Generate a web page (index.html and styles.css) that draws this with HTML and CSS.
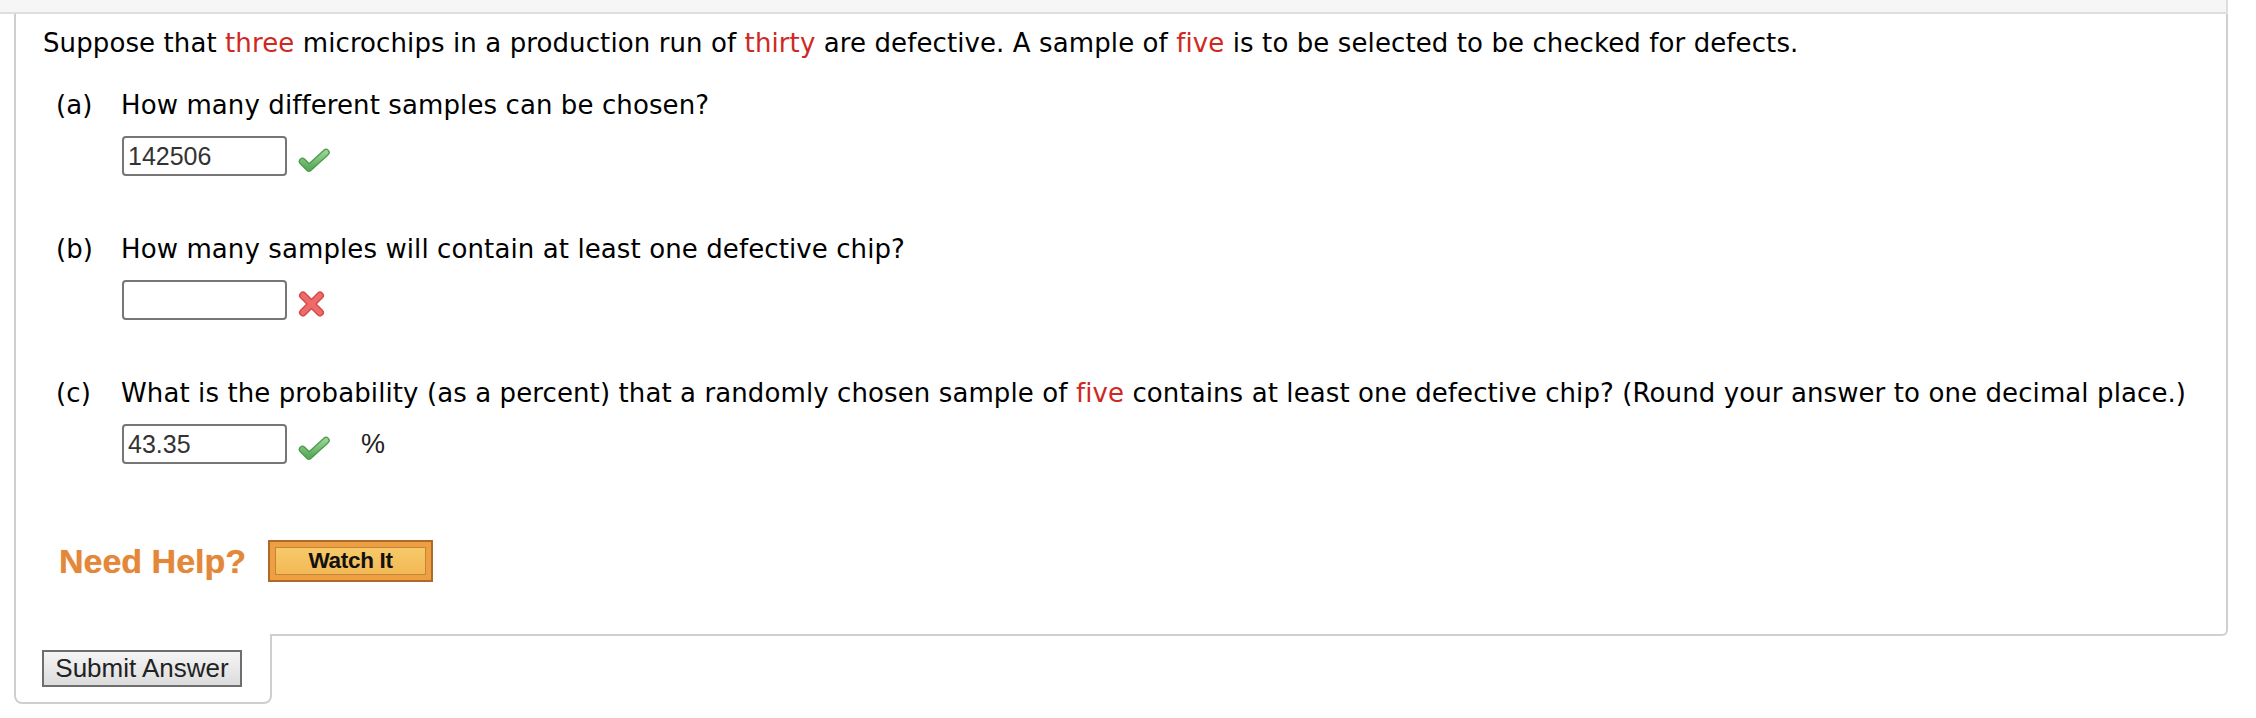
FILE: index.html
```html
<!DOCTYPE html>
<html lang="en">
<head>
<meta charset="utf-8">
<title>Question</title>
<link rel="stylesheet" href="styles.css">
</head>
<body>
<div class="topbar"></div>
<div class="question">
  <div class="qbody">
    <p class="stem">Suppose that <span class="red">three</span> microchips in a production run of <span class="red">thirty</span> are defective. A sample of <span class="red">five</span> is to be selected to be checked for defects.</p>

    <div class="part first">
      <div class="qline"><span class="label">(a)</span><span class="qtext">How many different samples can be chosen?</span></div>
      <div class="ans">
        <span class="field">142506</span>
        <svg class="icon check" width="32" height="25" viewBox="0 0 32 25"><defs><linearGradient id="g1" x1="0" y1="0" x2="0" y2="1"><stop offset="0" stop-color="#93d493"/><stop offset="1" stop-color="#5aab5a"/></linearGradient></defs><path d="M4.5 13.5 L11 20 L28 4.5" fill="none" stroke="#4c9a4c" stroke-width="7.5" stroke-linecap="round" stroke-linejoin="round"/><path d="M4.5 13.5 L11 20 L28 4.5" fill="none" stroke="url(#g1)" stroke-width="5" stroke-linecap="round" stroke-linejoin="round"/></svg>
      </div>
    </div>

    <div class="part">
      <div class="qline"><span class="label">(b)</span><span class="qtext">How many samples will contain at least one defective chip?</span></div>
      <div class="ans">
        <span class="field"></span>
        <svg class="icon cross" width="29" height="28" viewBox="0 0 29 28"><path d="M6 5.5 L23 22.5 M23 5.5 L6 22.5" fill="none" stroke="#d94a4a" stroke-width="8" stroke-linecap="round"/><path d="M6 5.5 L23 22.5 M23 5.5 L6 22.5" fill="none" stroke="#ec6b6b" stroke-width="5" stroke-linecap="round"/></svg>
      </div>
    </div>

    <div class="part">
      <div class="qline"><span class="label">(c)</span><span class="qtext">What is the probability (as a percent) that a randomly chosen sample of <span class="red">five</span> contains at least one defective chip? (Round your answer to one decimal place.)</span></div>
      <div class="ans">
        <span class="field">43.35</span>
        <svg class="icon check" width="32" height="25" viewBox="0 0 32 25"><defs><linearGradient id="g2" x1="0" y1="0" x2="0" y2="1"><stop offset="0" stop-color="#93d493"/><stop offset="1" stop-color="#5aab5a"/></linearGradient></defs><path d="M4.5 13.5 L11 20 L28 4.5" fill="none" stroke="#4c9a4c" stroke-width="7.5" stroke-linecap="round" stroke-linejoin="round"/><path d="M4.5 13.5 L11 20 L28 4.5" fill="none" stroke="url(#g2)" stroke-width="5" stroke-linecap="round" stroke-linejoin="round"/></svg>
        <span class="unit">%</span>
      </div>
    </div>

    <div class="help">
      <span class="need">Need Help?</span>
      <span class="watch"><span class="watch-inner">Watch It</span></span>
    </div>
  </div>
  <div class="tab">
    <button class="submit" type="button">Submit Answer</button>
  </div>
</div>
</body>
</html>
```

FILE: styles.css
```css
html, body {
  margin: 0;
  padding: 0;
  background: #ffffff;
}

body {
  font-family: "DejaVu Sans", Verdana, sans-serif;
  font-size: 26px;
  color: #000;
}

.topbar {
  width: 2226px;
  height: 12px;
  background: #f6f6f6;
  border-bottom: 2px solid #dedede;
  border-right: 2px solid #dedede;
  border-bottom-right-radius: 2px;
}

.question {
  margin-left: 14px;
  width: 2214px;
}

.qbody {
  border-left: 2px solid #cfcfcf;
  border-right: 2px solid #cfcfcf;
  border-bottom: 2px solid #cfcfcf;
  border-bottom-right-radius: 6px;
  padding: 14px 0 52px 0;
}

.stem {
  margin: 0 0 0 27px;
  line-height: 30px;
  white-space: nowrap;
  letter-spacing: 0.1px;
}

.red {
  color: #d0281f;
}

.part {
  margin-top: 58px;
  margin-left: 40px;
}

.part.first {
  margin-top: 32px;
}

.qline {
  display: flex;
  line-height: 30px;
  white-space: nowrap;
  letter-spacing: 0.1px;
}

.label {
  width: 65px;
  flex: none;
}

.ans {
  display: flex;
  align-items: center;
  margin-top: 16px;
  margin-left: 66px;
  height: 40px;
}

.field {
  box-sizing: border-box;
  width: 165px;
  height: 40px;
  border: 2px solid #767676;
  border-radius: 4px;
  padding: 0 4px;
  font-family: "Liberation Sans", Arial, sans-serif;
  font-size: 25px;
  line-height: 36px;
  color: #333;
  background: #fff;
}

.icon {
  display: block;
  flex: none;
}

.check {
  margin-left: 11px;
  margin-top: 8px;
}

.cross {
  margin-left: 10px;
  margin-top: 8px;
}

.unit {
  margin-left: 31px;
  font-family: "Liberation Sans", Arial, sans-serif;
  font-size: 27px;
  color: #222;
  line-height: 40px;
}

.help {
  display: flex;
  align-items: center;
  margin-top: 76px;
  margin-left: 43px;
  height: 42px;
}

.need {
  font-family: "Liberation Sans", Arial, sans-serif;
  font-weight: bold;
  font-size: 34px;
  color: #e3873a;
  line-height: 42px;
  text-shadow: 0 0 1px rgba(227, 135, 58, 0.7);
}

.watch {
  box-sizing: border-box;
  margin-left: 22px;
  width: 165px;
  height: 42px;
  border: 2px solid #ad6a2b;
  background: #ee9f42;
  padding: 5px;
  display: flex;
}

.watch-inner {
  flex: 1;
  border: 1px solid #c4843a;
  background: linear-gradient(#f7c968, #f2b955);
  font-family: "Liberation Sans", Arial, sans-serif;
  font-weight: bold;
  font-size: 22.5px;
  letter-spacing: -0.3px;
  color: #111;
  line-height: 26px;
  text-align: center;
}

.tab {
  box-sizing: border-box;
  width: 258px;
  margin-top: -2px;
  position: relative;
  background: #fff;
  border-left: 2px solid #cfcfcf;
  border-right: 2px solid #cfcfcf;
  border-bottom: 2px solid #cfcfcf;
  border-bottom-left-radius: 8px;
  border-bottom-right-radius: 8px;
  padding: 16px 0 15px 26px;
}

.submit {
  display: block;
  box-sizing: border-box;
  width: 200px;
  height: 37px;
  margin: 0;
  padding: 0;
  border: 2px solid #6e6e6e;
  border-radius: 0;
  background: linear-gradient(#f5f5f5, #dcdcdc);
  font-family: "Liberation Sans", Arial, sans-serif;
  font-size: 26px;
  color: #222;
  line-height: 33px;
  text-align: center;
}
```
